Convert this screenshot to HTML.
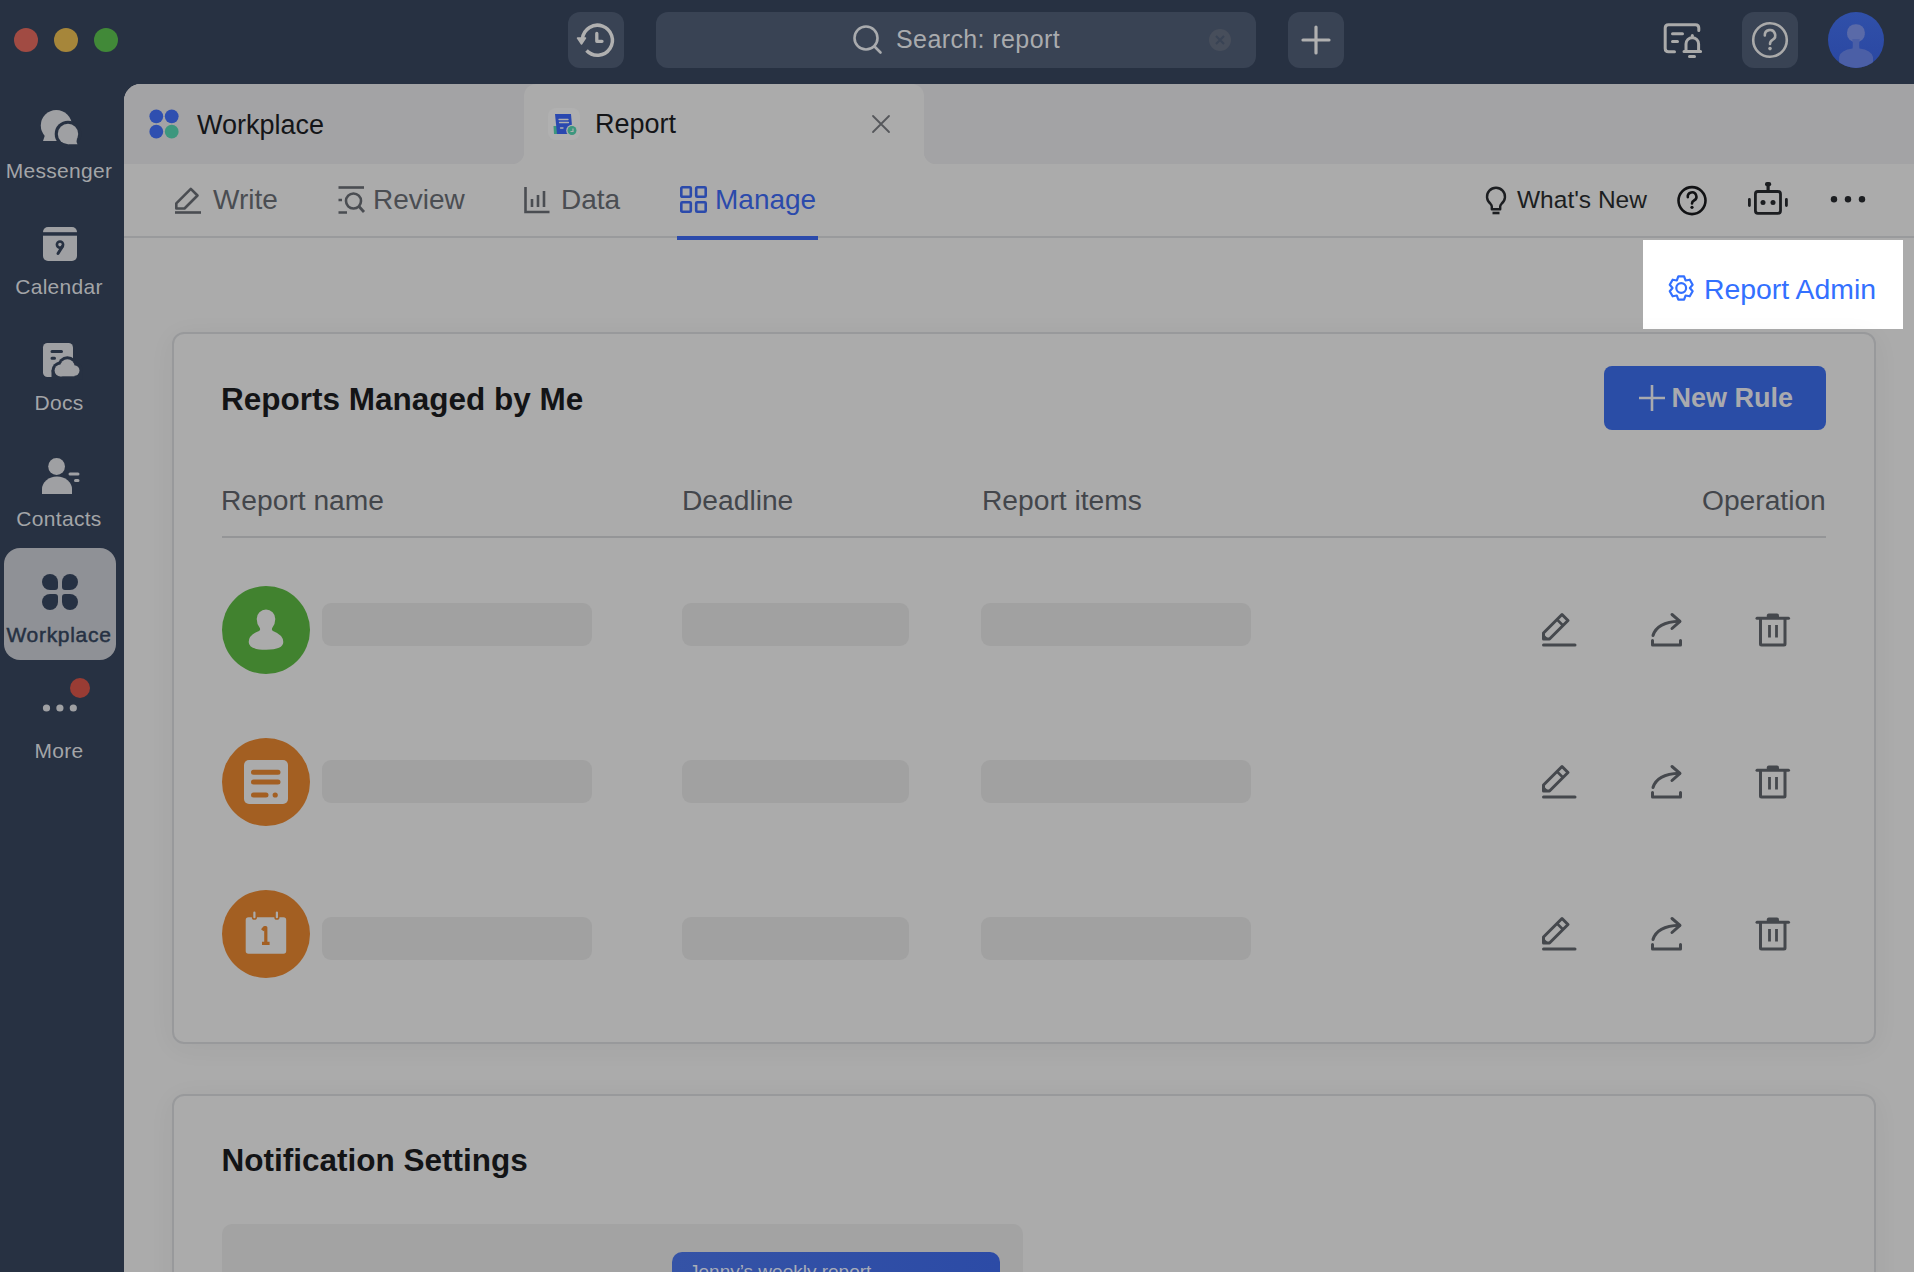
<!DOCTYPE html>
<html><head><meta charset="utf-8">
<style>
*{margin:0;padding:0;box-sizing:border-box}
html,body{width:1914px;height:1272px;overflow:hidden;background:#273142;font-family:"Liberation Sans",sans-serif}
.a{position:absolute;white-space:nowrap}
svg{position:absolute;overflow:visible}
.dot{position:absolute;width:24px;height:24px;border-radius:50%}
.tbtn{position:absolute;top:12px;width:56px;height:56px;border-radius:12px;background:#394354}
.side{position:absolute;left:0;width:118px;text-align:center;color:#a3a5a8;font-size:21px;line-height:21px;letter-spacing:0.3px}
.nav{position:absolute;top:186px;font-size:28px;line-height:28px;color:#4a4d52;white-space:nowrap}
.hdr{position:absolute;top:486.1px;font-size:28.2px;line-height:28.2px;color:#43464b;white-space:nowrap}
.sk{position:absolute;height:43px;border-radius:9px;background:#a1a1a1}
.av{position:absolute;left:222px;width:88px;height:88px;border-radius:50%}
</style></head><body>
<!-- traffic lights -->
<div class="dot" style="left:14px;top:28px;background:#a14b43"></div>
<div class="dot" style="left:54px;top:28px;background:#a6863a"></div>
<div class="dot" style="left:94px;top:28px;background:#418938"></div>

<!-- history btn -->
<div class="tbtn" style="left:568px"></div>
<svg style="left:568px;top:12px" width="56" height="56" viewBox="0 0 56 56">
  <path d="M14.5 26.5 A15 15 0 1 1 18.5 38.5" fill="none" stroke="#b0b0b0" stroke-width="3.5"/>
  <path d="M9.5 26 L17.5 26 L13.5 32 Z" fill="#b0b0b0" stroke="#b0b0b0" stroke-width="1.5" stroke-linejoin="round"/>
  <path d="M28.8 21.5 V29.3 H34" fill="none" stroke="#b0b0b0" stroke-width="3.3" stroke-linecap="round" stroke-linejoin="round"/>
</svg>
<!-- search -->
<div class="a" style="left:656px;top:12px;width:600px;height:56px;border-radius:12px;background:#394354"></div>
<svg style="left:850px;top:22px" width="36" height="36" viewBox="0 0 36 36">
  <circle cx="16" cy="16" r="11.5" fill="none" stroke="#a9abae" stroke-width="2.6"/>
  <path d="M24.5 24.5 L30.5 30.5" stroke="#a9abae" stroke-width="2.6" stroke-linecap="round"/>
</svg>
<div class="a" style="left:896px;top:27px;font-size:25px;line-height:25px;color:#a9abae;letter-spacing:0.4px">Search: report</div>
<svg style="left:1208px;top:28px" width="24" height="24" viewBox="0 0 24 24">
  <circle cx="12" cy="12" r="11" fill="#474e5b"/>
  <path d="M8 8 L16 16 M16 8 L8 16" stroke="#394354" stroke-width="2"/>
</svg>
<!-- plus btn -->
<div class="tbtn" style="left:1288px"></div>
<svg style="left:1288px;top:12px" width="56" height="56" viewBox="0 0 56 56">
  <path d="M28 15 V41 M15 28 H41" stroke="#b0b0b0" stroke-width="3.2" stroke-linecap="round"/>
</svg>
<!-- notification icon -->
<svg style="left:1660px;top:20px" width="46" height="40" viewBox="0 0 46 40">
  <path d="M14.5 31.8 H8.5 Q5.2 31.8 5.2 28.5 V8.1 Q5.2 4.8 8.5 4.8 H35.5 Q38.8 4.8 38.8 8.1 V10.5" fill="none" stroke="#aaaaaa" stroke-width="3" stroke-linecap="round"/>
  <path d="M12.5 13.7 H22.5 M12.5 21.6 H17.5" stroke="#aaaaaa" stroke-width="3" stroke-linecap="round"/>
  <path d="M26 31 V24 A6.3 6.3 0 0 1 38.6 24 V31 M24 31.4 H40.6 M29.5 36.6 H34.5" fill="none" stroke="#aaaaaa" stroke-width="3" stroke-linecap="round"/>
  <path d="M32.3 15.6 V16.5" stroke="#aaaaaa" stroke-width="3" stroke-linecap="round"/>
</svg>
<!-- help btn -->
<div class="tbtn" style="left:1742px"></div>
<svg style="left:1742px;top:12px" width="56" height="56" viewBox="0 0 56 56">
  <circle cx="28" cy="28" r="16.8" fill="none" stroke="#aaaaaa" stroke-width="2.6"/>
  <path d="M22.8 23.5 A5.2 5.2 0 1 1 30.5 27.8 Q28 29.3 28 32" fill="none" stroke="#aaaaaa" stroke-width="2.6" stroke-linecap="round"/>
  <circle cx="28" cy="36.6" r="1.8" fill="#aaaaaa"/>
</svg>
<!-- avatar -->
<div class="a" style="left:1828px;top:12px;width:56px;height:56px;border-radius:50%;background:linear-gradient(180deg,#3050a9,#2a47a2);overflow:hidden">
  <svg style="left:0;top:0" width="56" height="56" viewBox="0 0 56 56">
    <rect x="19.1" y="12.2" width="17.7" height="18" rx="8.5" ry="8" fill="#5a6aa8"/>
    <path d="M24.3 27 Q25.2 33 24.5 36.5 Q12.5 38 11.1 45 V58 H45 V45 Q43.5 38 31.5 36.5 Q30.8 33 31.7 27 Z" fill="#4b5fa6"/>
  </svg>
</div>

<!-- sidebar -->
<svg style="left:0;top:84px" width="124" height="700" viewBox="0 84 124 700">
  <!-- messenger -->
  <circle cx="56.3" cy="125.5" r="15.5" fill="#9fa0a3"/>
  <path d="M43 141 H57 V130 H45 Q45.5 134 44.5 136.5 Z" fill="#9fa0a3"/>
  <circle cx="68" cy="134" r="13.3" fill="#273142"/>
  <circle cx="68" cy="134" r="10.2" fill="#9fa0a3"/>
  <path d="M68 144.2 H77.5 Q76 142 76.8 139 L70 139 Z" fill="#9fa0a3"/>
  <!-- calendar -->
  <rect x="43" y="227" width="34" height="34" rx="5" fill="#9fa0a3"/>
  <rect x="43" y="232.2" width="34" height="3.5" fill="#273142"/>
  <circle cx="60" cy="244.6" r="3.1" fill="none" stroke="#273142" stroke-width="2.6"/>
  <path d="M62.6 246.2 L58 253.5" stroke="#273142" stroke-width="3" stroke-linecap="round"/>
  <!-- docs -->
  <rect x="43" y="343" width="30" height="34" rx="4.5" fill="#9fa0a3"/>
  <path d="M52 351.5 H61.5 M52 358.3 H54.5" stroke="#273142" stroke-width="3" stroke-linecap="round"/>
  <g fill="#273142">
    <circle cx="60.5" cy="370.5" r="9"/><circle cx="67.4" cy="366.3" r="10"/><circle cx="74.3" cy="370.5" r="8.5"/>
    <rect x="51.5" y="370.5" width="31" height="9.3"/>
  </g>
  <g fill="#9fa0a3">
    <circle cx="60.5" cy="370.5" r="5.9"/><circle cx="67.4" cy="366.3" r="7"/><circle cx="74.3" cy="370.5" r="5.2"/>
    <rect x="60.5" y="368" width="14" height="8.3"/>
  </g>
  <!-- contacts -->
  <circle cx="56.6" cy="466.5" r="8.4" fill="#9fa0a3"/>
  <path d="M42 494 V489 A15 12.5 0 0 1 72 489 V494 Z" fill="#9fa0a3"/>
  <path d="M70 474 H78 M75.5 480.5 H78" stroke="#9fa0a3" stroke-width="3" stroke-linecap="round"/>
  <!-- more -->
  <circle cx="46.5" cy="708" r="3.6" fill="#9fa0a3"/>
  <circle cx="59.9" cy="708" r="3.6" fill="#9fa0a3"/>
  <circle cx="73.3" cy="708" r="3.6" fill="#9fa0a3"/>
  <circle cx="80" cy="688" r="10" fill="#993c34"/>
</svg>
<div class="a" style="left:4px;top:548px;width:112px;height:112px;border-radius:16px;background:#8f9196"></div>
<svg style="left:0;top:560px" width="124" height="60" viewBox="0 560 124 60">
  <path d="M42 582 A8 8 0 0 1 50 574 A8 8 0 0 1 58 582 V587 A3 3 0 0 1 55 590 H50 A8 8 0 0 1 42 582 Z" fill="#263143"/>
  <path d="M78 582 A8 8 0 0 0 70 574 A8 8 0 0 0 62 582 V587 A3 3 0 0 0 65 590 H70 A8 8 0 0 0 78 582 Z" fill="#263143"/>
  <path d="M42 602 A8 8 0 0 0 50 610 A8 8 0 0 0 58 602 V597 A3 3 0 0 0 55 594 H50 A8 8 0 0 0 42 602 Z" fill="#263143"/>
  <path d="M78 602 A8 8 0 0 1 70 610 A8 8 0 0 1 62 602 V597 A3 3 0 0 1 65 594 H70 A8 8 0 0 1 78 602 Z" fill="#263143"/>
</svg>
<div class="side" style="top:160px">Messenger</div>
<div class="side" style="top:276px">Calendar</div>
<div class="side" style="top:392px">Docs</div>
<div class="side" style="top:508px">Contacts</div>
<div class="side" style="top:624px;color:#263143;letter-spacing:0.7px;-webkit-text-stroke:0.5px #263143">Workplace</div>
<div class="side" style="top:740px">More</div>

<!-- PANEL -->
<div class="a" style="left:124px;top:84px;width:1790px;height:1188px;background:#ababab;border-top-left-radius:17px;overflow:hidden">
  <!-- tab bar inactive areas -->
  <div class="a" style="left:0;top:0;width:400px;height:80px;background:#a3a3a5;border-bottom-right-radius:12px"></div>
  <div class="a" style="left:800px;top:0;width:990px;height:80px;background:#a3a3a5;border-bottom-left-radius:12px"></div>
  <div class="a" style="left:400px;top:0;width:400px;height:80px;background:#a3a3a5"></div>
  <div class="a" style="left:400px;top:0;width:400px;height:82px;background:#ababab;border-radius:12px 12px 0 0"></div>
  <div class="a" style="left:390px;top:68px;width:420px;height:14px;background:transparent"></div>
</div>
<!-- fix tab feet: redraw inactive with rounded corners over active -->
<div class="a" style="left:124px;top:84px;width:400px;height:80px;background:#a3a3a5;border-bottom-right-radius:12px;border-top-left-radius:17px"></div>
<div class="a" style="left:924px;top:84px;width:990px;height:80px;background:#a3a3a5;border-bottom-left-radius:12px"></div>

<!-- workplace tab -->
<svg style="left:148px;top:108px" width="32" height="32" viewBox="0 0 32 32">
  <circle cx="8.3" cy="8.3" r="6.9" fill="#2f4fb0"/>
  <circle cx="23.7" cy="8.3" r="6.9" fill="#2f4fb0"/>
  <circle cx="8.3" cy="23.7" r="6.9" fill="#2f4fb0"/>
  <circle cx="23.7" cy="23.7" r="6.9" fill="#3d977e"/>
</svg>
<div class="a" style="left:197px;top:111.5px;font-size:27px;line-height:27px;color:#141518">Workplace</div>
<!-- report tab -->
<div class="a" style="left:548px;top:108px;width:32px;height:32px;border-radius:8px;background:#b0b0b0"></div>
<svg style="left:548px;top:108px" width="32" height="32" viewBox="0 0 32 32">
  <path d="M5.5 18 H9.5 V26 H6 Z" fill="#3d977e"/>
  <path d="M7 6 H23 L24 18 L21 26 H9 Z" fill="#2a48b0"/>
  <path d="M11 11.5 H20 M11.5 14.5 H20.5 M12.5 20 H15" stroke="#b0b0b0" stroke-width="1.3" stroke-linecap="round"/>
  <circle cx="24" cy="22.5" r="5.8" fill="#b0b0b0"/>
  <circle cx="24" cy="22.5" r="4.5" fill="#3d977e"/>
  <path d="M25 20.5 V23.5 H22.5" fill="none" stroke="#b0b0b0" stroke-width="1.2"/>
</svg>
<div class="a" style="left:595px;top:111px;font-size:27px;line-height:27px;color:#141518">Report</div>
<svg style="left:870px;top:113px" width="22" height="22" viewBox="0 0 22 22">
  <path d="M3 3 L19 19 M19 3 L3 19" stroke="#55575b" stroke-width="1.8" stroke-linecap="round"/>
</svg>

<!-- toolbar -->
<div class="a" style="left:124px;top:236px;width:1790px;height:2px;background:#999a9c"></div>
<svg style="left:170px;top:182px" width="36" height="36" viewBox="0 0 36 36">
  <path d="M6.3 26.5 V21.3 L20.8 6.8 L27.5 13.5 L14.5 26.5 Z" fill="none" stroke="#4a4d52" stroke-width="2.6" stroke-linejoin="round"/>
  <path d="M5 30.5 H31" stroke="#4a4d52" stroke-width="2.6"/>
</svg>
<div class="nav" style="left:213px">Write</div>
<svg style="left:334px;top:182px" width="36" height="36" viewBox="0 0 36 36">
  <path d="M4.5 5.5 H30" stroke="#4a4d52" stroke-width="2.6"/>
  <path d="M4.5 18 H8 M4.5 30.5 H13" stroke="#4a4d52" stroke-width="2.6"/>
  <circle cx="19.5" cy="19" r="7.5" fill="none" stroke="#4a4d52" stroke-width="2.6"/>
  <path d="M25 24.5 L30 30" stroke="#4a4d52" stroke-width="2.8"/>
</svg>
<div class="nav" style="left:373px">Review</div>
<svg style="left:520px;top:182px" width="36" height="36" viewBox="0 0 36 36">
  <path d="M5.5 5 V30 H29.5" fill="none" stroke="#4a4d52" stroke-width="2.6"/>
  <path d="M12 17 V25 M18 13 V25 M24 9 V25" stroke="#4a4d52" stroke-width="2.6"/>
</svg>
<div class="nav" style="left:561px">Data</div>
<svg style="left:676px;top:182px" width="36" height="36" viewBox="0 0 36 36">
  <rect x="5.3" y="5.3" width="9.5" height="9.5" rx="1" fill="none" stroke="#2b4aab" stroke-width="2.6"/>
  <rect x="20.2" y="5.3" width="9.5" height="9.5" rx="1" fill="none" stroke="#2b4aab" stroke-width="2.6"/>
  <rect x="5.3" y="20.2" width="9.5" height="9.5" rx="1" fill="none" stroke="#2b4aab" stroke-width="2.6"/>
  <rect x="20.2" y="20.2" width="9.5" height="9.5" rx="1" fill="none" stroke="#2b4aab" stroke-width="2.6"/>
</svg>
<div class="nav" style="left:715px;color:#2b4aab">Manage</div>
<div class="a" style="left:677px;top:236px;width:141px;height:4px;background:#2b4aab"></div>

<!-- right toolbar -->
<svg style="left:1480px;top:182px" width="32" height="36" viewBox="0 0 32 36">
  <path d="M11.8 27.3 V24.5 Q11.8 23 10.5 21.8 A9 9 0 1 1 21.5 21.8 Q20.2 23 20.2 24.5 V27.3 Z" fill="none" stroke="#1c1e21" stroke-width="2.4" stroke-linejoin="round"/>
  <path d="M12.5 31 H19.5" stroke="#1c1e21" stroke-width="2.6"/>
</svg>
<div class="a" style="left:1517px;top:187.8px;font-size:24.5px;line-height:24.5px;color:#1c1e21">What's New</div>
<svg style="left:1674px;top:182px" width="36" height="36" viewBox="0 0 36 36">
  <circle cx="18" cy="18.6" r="13.5" fill="none" stroke="#111214" stroke-width="2.6"/>
  <path d="M13.8 15.2 A4.3 4.3 0 1 1 20 18.5 Q18 19.5 18 21.5" fill="none" stroke="#111214" stroke-width="2.6" stroke-linecap="round"/>
  <circle cx="18" cy="25.3" r="1.6" fill="#111214"/>
</svg>
<svg style="left:1746px;top:180px" width="44" height="38" viewBox="0 0 44 38">
  <rect x="9.4" y="11.5" width="25.1" height="21.8" rx="2.5" fill="none" stroke="#1c1e21" stroke-width="2.8"/>
  <path d="M22.1 5 V11.5" stroke="#1c1e21" stroke-width="3.2"/>
  <rect x="19" y="2" width="6.2" height="4.2" rx="2" fill="#1c1e21"/>
  <path d="M3.4 19.5 V25.5 M40.4 19.5 V25.5" stroke="#1c1e21" stroke-width="2.8" stroke-linecap="round"/>
  <circle cx="17" cy="22.5" r="2.5" fill="#1c1e21"/>
  <circle cx="27" cy="22.5" r="2.5" fill="#1c1e21"/>
</svg>
<svg style="left:1826px;top:190px" width="44" height="20" viewBox="0 0 44 20">
  <circle cx="8" cy="9.3" r="3.2" fill="#1c1e21"/>
  <circle cx="22" cy="9.3" r="3.2" fill="#1c1e21"/>
  <circle cx="36" cy="9.3" r="3.2" fill="#1c1e21"/>
</svg>

<!-- report admin highlight -->
<div class="a" style="left:1643px;top:240px;width:260px;height:89px;background:#ffffff"></div>
<svg style="left:1666px;top:273px" width="30" height="30" viewBox="0 0 30 30">
  <path d="M10.85 7.47 L12.32 3.45 L18.08 3.45 L19.55 7.47 L23.76 6.73 L26.64 11.72 L23.90 15.00 L26.64 18.28 L23.76 23.27 L19.55 22.53 L18.08 26.55 L12.32 26.55 L10.85 22.53 L6.64 23.27 L3.76 18.28 L6.50 15.00 L3.76 11.72 L6.64 6.73 Z" fill="none" stroke="#3370ff" stroke-width="2.2" stroke-linejoin="round"/>
  <circle cx="15.2" cy="15" r="4.9" fill="none" stroke="#3370ff" stroke-width="2.2"/>
</svg>
<div class="a" style="left:1704px;top:274.8px;font-size:28.4px;line-height:28.4px;color:#3370ff">Report Admin</div>

<!-- CARD 1 -->
<div class="a" style="left:172px;top:332px;width:1704px;height:712px;border:2px solid #98999b;border-radius:12px;box-shadow:0 4px 28px rgba(0,0,0,0.045)"></div>
<div class="a" style="left:221px;top:384.1px;font-size:31.5px;line-height:31.5px;font-weight:700;color:#131416">Reports Managed by Me</div>
<div class="a" style="left:1604px;top:366px;width:222px;height:64px;border-radius:8px;background:#2a4da6"></div>
<svg style="left:1636px;top:382px" width="32" height="32" viewBox="0 0 32 32">
  <path d="M16 3 V29 M3 16 H29" stroke="#a9aaae" stroke-width="2.6"/>
</svg>
<div class="a" style="left:1671.5px;top:385.1px;font-size:27px;line-height:27px;font-weight:700;color:#a9aaae">New Rule</div>

<div class="hdr" style="left:221px">Report name</div>
<div class="hdr" style="left:682px">Deadline</div>
<div class="hdr" style="left:982px">Report items</div>
<div class="hdr" style="left:1702px">Operation</div>
<div class="a" style="left:222px;top:536px;width:1604px;height:2px;background:#949597"></div>

<!-- rows -->
<div class="av" style="top:586px;background:#41822f"></div>
<svg style="left:222px;top:586px" width="88" height="88" viewBox="0 0 88 88">
  <path d="M44 23.6 A9.3 9.3 0 0 1 53.3 32.9 Q53.3 38 50.2 42 Q49.2 44 51.5 45.2 Q61.3 49 61.3 56 Q61.3 63.7 44 63.7 Q26.7 63.7 26.7 56 Q26.7 49 36.5 45.2 Q38.8 44 37.8 42 Q34.7 38 34.7 32.9 A9.3 9.3 0 0 1 44 23.6 Z" fill="#ababab"/>
</svg>
<div class="av" style="top:738px;background:#a35f22"></div>
<svg style="left:222px;top:738px" width="88" height="88" viewBox="0 0 88 88">
  <rect x="22" y="22" width="44" height="44" rx="5" fill="#ababab"/>
  <path d="M31.5 34.2 H56 M31.5 43.9 H56 M31.5 57 H44" stroke="#a35f22" stroke-width="5" stroke-linecap="round"/>
  <circle cx="53.2" cy="57" r="2.6" fill="#a35f22"/>
</svg>
<div class="av" style="top:890px;background:#a35f22"></div>
<svg style="left:222px;top:890px" width="88" height="88" viewBox="0 0 88 88">
  <path d="M26.5 27.2 H29.8 A2.6 2.6 0 0 0 35 27.2 H52.3 A2.6 2.6 0 0 0 57.5 27.2 H61.5 Q64.2 27.2 64.2 30 V61 Q64.2 63.8 61.5 63.8 H26.5 Q23.7 63.8 23.7 61 V30 Q23.7 27.2 26.5 27.2 Z" fill="#ababab"/>
  <path d="M32.4 22.5 V27.2 A1.2 1.2 0 0 0 32.4 27.2 M54.9 22.5 V27.2" stroke="#ababab" stroke-width="2.2" stroke-linecap="round"/>
  <path d="M40.3 40.3 L42.6 37.5 H43.8 V52.5 M40 53.3 H47.6" fill="none" stroke="#a35f22" stroke-width="3.2" stroke-linejoin="round"/>
</svg>

<div class="sk" style="left:322px;top:603px;width:270px"></div>
<div class="sk" style="left:682px;top:603px;width:227px"></div>
<div class="sk" style="left:981px;top:603px;width:270px"></div>
<div class="sk" style="left:322px;top:760px;width:270px"></div>
<div class="sk" style="left:682px;top:760px;width:227px"></div>
<div class="sk" style="left:981px;top:760px;width:270px"></div>
<div class="sk" style="left:322px;top:917px;width:270px"></div>
<div class="sk" style="left:682px;top:917px;width:227px"></div>
<div class="sk" style="left:981px;top:917px;width:270px"></div>

<!-- operation icons (defs) -->
<svg width="0" height="0" style="left:0;top:0">
  <defs>
    <g id="ied">
      <path d="M1.5 26 V20 L20 1.5 L26 7.5 L7.5 26 Z" fill="none" stroke="#45484d" stroke-width="3" stroke-linejoin="round"/>
      <path d="M1.5 26 V21 L6.5 26 Z" fill="#45484d"/>
      <path d="M15 6.5 L21 12.5" stroke="#45484d" stroke-width="2.5"/>
      <path d="M1.5 32 H33" stroke="#45484d" stroke-width="3" stroke-linecap="round"/>
    </g>
    <g id="ish">
      <path d="M2 22.5 Q6 9 28.5 8.2" fill="none" stroke="#45484d" stroke-width="3" stroke-linecap="round"/>
      <path d="M21 1.5 L29 8.3 L21 15.5" fill="none" stroke="#45484d" stroke-width="3" stroke-linecap="round" stroke-linejoin="round"/>
      <path d="M1.5 27.5 V32 H29.5 V27.5" fill="none" stroke="#45484d" stroke-width="3" stroke-linecap="round" stroke-linejoin="round"/>
    </g>
    <g id="itr">
      <path d="M1 5.2 H32.5" stroke="#45484d" stroke-width="3" stroke-linecap="round"/>
      <path d="M10.8 4.5 V2.5 Q10.8 0.5 12.8 0.5 H21 Q23 0.5 23 2.5 V4.5 Z" fill="#45484d"/>
      <path d="M4.5 5.5 V31 Q4.5 32 5.5 32 H28 Q29 32 29 31 V5.5" fill="none" stroke="#45484d" stroke-width="3" stroke-linejoin="round"/>
      <path d="M13.5 12 V24.5 M20.5 12 V24.5" stroke="#45484d" stroke-width="2.8"/>
    </g>
  </defs>
</svg>
<svg style="left:1542px;top:613px" width="36" height="36"><use href="#ied"/></svg>
<svg style="left:1651px;top:613px" width="36" height="36"><use href="#ish"/></svg>
<svg style="left:1756px;top:613px" width="36" height="36"><use href="#itr"/></svg>
<svg style="left:1542px;top:765px" width="36" height="36"><use href="#ied"/></svg>
<svg style="left:1651px;top:765px" width="36" height="36"><use href="#ish"/></svg>
<svg style="left:1756px;top:765px" width="36" height="36"><use href="#itr"/></svg>
<svg style="left:1542px;top:917px" width="36" height="36"><use href="#ied"/></svg>
<svg style="left:1651px;top:917px" width="36" height="36"><use href="#ish"/></svg>
<svg style="left:1756px;top:917px" width="36" height="36"><use href="#itr"/></svg>

<!-- CARD 2 -->
<div class="a" style="left:172px;top:1094px;width:1704px;height:400px;border:2px solid #98999b;border-radius:12px;box-shadow:0 4px 28px rgba(0,0,0,0.045)"></div>
<div class="a" style="left:221.5px;top:1145.3px;font-size:31.5px;line-height:31.5px;font-weight:700;color:#131416">Notification Settings</div>
<div class="a" style="left:222px;top:1224px;width:801px;height:200px;border-radius:10px;background:#a3a3a3"></div>
<div class="a" style="left:672px;top:1252px;width:328px;height:100px;border-radius:10px;background:linear-gradient(90deg,#3553a6,#2c4ba6)"></div>
<div class="a" style="left:689px;top:1262.3px;font-size:19px;line-height:19px;color:#a9adb8">Jenny’s weekly report</div>

</body></html>
